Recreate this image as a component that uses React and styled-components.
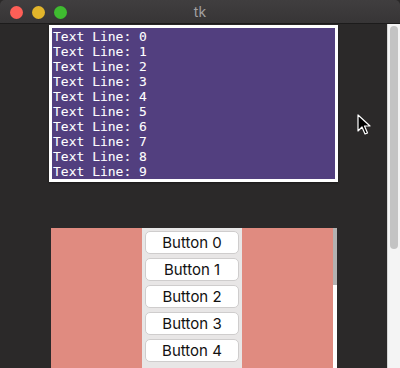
import styled, { createGlobalStyle } from 'styled-components';

const Global = createGlobalStyle`
  html, body {
    margin: 0;
    padding: 0;
    background: #2b2929;
    overflow: hidden;
  }
`;

const Window = styled.div`
  position: relative;
  width: 400px;
  height: 368px;
  display: flex;
  flex-direction: column;
  background: #2b2929;
  overflow: hidden;
`;

const TitleBar = styled.div`
  position: relative;
  height: 24px;
  flex: none;
  display: flex;
  align-items: center;
  gap: 9px;
  padding-left: 10px;
  background: linear-gradient(180deg, #403e3f 0%, #373536 100%);
  border-bottom: 1px solid #1c1b1b;
  box-sizing: border-box;
  border-radius: 5px 5px 0 0;
`;

const Light = styled.span`
  width: 13px;
  height: 13px;
  border-radius: 50%;
  background: ${p => p.$color};
  margin-top: 1px;
`;

const Title = styled.div`
  position: absolute;
  left: 0;
  right: 0;
  top: 3px;
  text-align: center;
  font-family: Inter, "Liberation Sans", sans-serif;
  font-size: 14px;
  color: #a3a1a2;
`;

const Body = styled.div`
  flex: 1;
  display: flex;
  min-height: 0;
`;

const Main = styled.div`
  flex: 1;
  display: flex;
  flex-direction: column;
  padding-top: 1px;
`;

const TextBox = styled.div`
  margin-left: 49px;
  width: 289px;
  height: 157px;
  box-sizing: border-box;
  border: 3px solid #ffffff;
  background: #523f7f;
  padding: 1px 0 0 1px;
  box-shadow: 0 1px 2px rgba(0, 0, 0, 0.4);
`;

const Line = styled.div`
  font-family: "DejaVu Sans Mono", monospace;
  font-size: 13px;
  line-height: 15px;
  color: #ffffff;
  white-space: pre;
  -webkit-text-stroke: 0.08px #ffffff;
`;

const ButtonPane = styled.div`
  margin-top: 46px;
  margin-left: 51px;
  width: 286px;
  flex: 1;
  display: flex;
  min-height: 0;
`;

const Pink = styled.div`
  flex: 1;
  background: #e08b80;
  display: flex;
  justify-content: center;
`;

const Column = styled.div`
  width: 100px;
  background: #e8e6e6;
  display: flex;
  flex-direction: column;
  align-items: center;
  gap: 4px;
  padding-top: 3px;
  box-sizing: border-box;
`;

const Button = styled.button`
  width: 94px;
  height: 23px;
  flex: none;
  background: #ffffff;
  border: 1px solid #cfcdcd;
  border-radius: 5px;
  font-family: Inter, "Liberation Sans", sans-serif;
  font-size: 15px;
  color: #111111;
  padding: 0;
  line-height: 21px;
`;

const InnerScroll = styled.div`
  width: 4px;
  background: #ffffff;
  display: flex;
  flex-direction: column;
`;

const InnerThumb = styled.div`
  height: 57px;
  background: #b3b1b1;
`;

const OuterScroll = styled.div`
  width: 13px;
  flex: none;
  background: #f4f4f4;
  border-left: 1px solid #d6d6d6;
  box-sizing: border-box;
  padding: 2px 2px 0 2px;
`;

const OuterThumb = styled.div`
  height: 223px;
  border-radius: 4px;
  background: #c3c3c3;
`;

const Cursor = styled.svg`
  position: absolute;
  left: 357px;
  top: 114px;
`;

const lights = ['#fe5f57', '#e2b52b', '#3fbb30'];

const App = () => {
  return (
    <Window>
      <Global />
      <TitleBar>
        {lights.map(c => <Light key={c} $color={c} />)}
        <Title>tk</Title>
      </TitleBar>
      <Body>
        <Main>
          <TextBox>
            {Array.from({ length: 10 }, (_, i) => (
              <Line key={i}>Text Line: {i}</Line>
            ))}
          </TextBox>
          <ButtonPane>
            <Pink>
              <Column>
                {Array.from({ length: 5 }, (_, i) => (
                  <Button key={i}>Button {i}</Button>
                ))}
              </Column>
            </Pink>
            <InnerScroll>
              <InnerThumb />
            </InnerScroll>
          </ButtonPane>
        </Main>
        <OuterScroll>
          <OuterThumb />
        </OuterScroll>
      </Body>
      <Cursor width="14" height="22" viewBox="0 0 14 22">
        <path d="M1 1 L1 17 L5 13 L8 20 L10.5 19 L7.5 12 L13 12 Z" fill="#000" stroke="#fff" strokeWidth="1.2" strokeLinejoin="round" />
      </Cursor>
    </Window>
  );
};

export default App;
